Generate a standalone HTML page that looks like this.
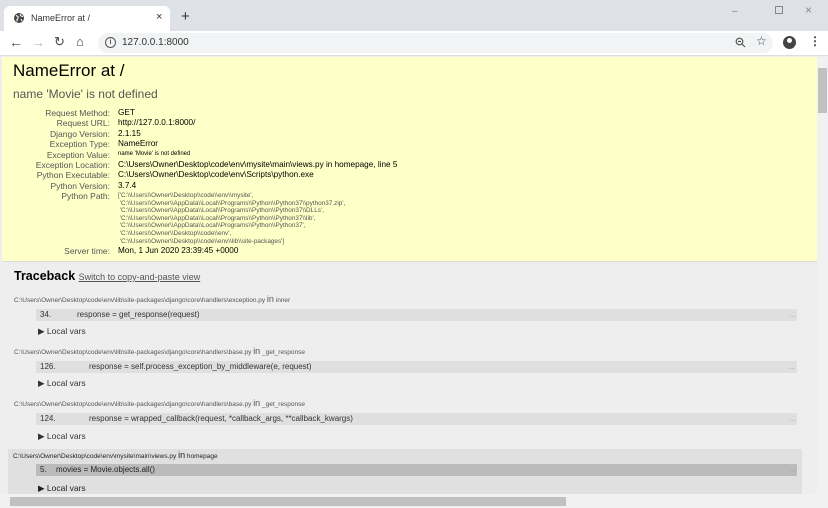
<!DOCTYPE html>
<html><head><style>
*{margin:0;padding:0;box-sizing:border-box}
body{width:828px;height:508px;overflow:hidden;position:relative;font-family:"Liberation Sans",Arial,sans-serif;background:#eee;color:#000}
.a{position:absolute;white-space:nowrap}
.lbl{position:absolute;right:718px;font-size:8.5px;color:#555;text-align:right}
.val{position:absolute;left:118px;font-size:8.2px}
.path{font-size:6.4px;color:#555;line-height:7.6px}
.fn{position:absolute;left:14px;font-size:6.5px;color:#555}
.fn b{font-weight:normal;font-size:9px}
.bar{position:absolute;left:36px;width:761px;height:12px;background:#dfdfdf;font-size:8px;color:#333;line-height:12px}
.bar .n{position:absolute;left:4px}
.bar .c{position:absolute}
.bar .d{position:absolute;right:2px;top:1px;font-size:7px;color:#999}
.lv{position:absolute;left:38px;font-size:8.5px;color:#333}
</style></head><body>
<div class="a" style="left:0;top:0;width:828px;height:31px;background:#dee1e6"></div>
<div class="a" style="left:4px;top:6px;width:166px;height:25px;background:#fff;border-radius:6px 6px 0 0"></div>
<svg class="a" style="left:13px;top:12px" width="12" height="12" viewBox="0 0 12 12"><circle cx="6" cy="6" r="5" fill="#444"/><path d="M3 3.5l2 1v2l-1 1v2M7 2l1 2 2 .5M8 7l1 2" stroke="#fff" stroke-width="1.1" fill="none"/></svg>
<div class="a" style="left:31px;top:13px;font-size:9px;color:#333">NameError at /</div>
<div class="a" style="left:156px;top:11px;font-size:11px;color:#333">×</div>
<div class="a" style="left:181px;top:8px;font-size:15px;color:#333">+</div>
<div class="a" style="left:732px;top:6px;font-size:10px;color:#888">–</div>
<div class="a" style="left:775px;top:6px;width:8px;height:8px;border:1px solid #888"></div>
<div class="a" style="left:805px;top:3px;font-size:12px;color:#888">×</div>
<div class="a" style="left:0;top:31px;width:828px;height:25px;background:#fff;border-bottom:1px solid #ddd"></div>
<div class="a" style="left:9px;top:34px;font-size:14px;color:#444">←</div>
<div class="a" style="left:31px;top:34px;font-size:14px;color:#bbb">→</div>
<div class="a" style="left:54px;top:34px;font-size:13px;color:#444">↻</div>
<div class="a" style="left:76px;top:34px;font-size:13px;color:#444">⌂</div>
<div class="a" style="left:98px;top:33px;width:675px;height:20px;background:#f1f3f4;border-radius:10px"></div>
<div class="a" style="left:105px;top:37px;width:11px;height:11px;border:1.3px solid #555;border-radius:50%;font-size:7px;text-align:center;line-height:9px;color:#555;font-weight:bold">i</div>
<div class="a" style="left:122px;top:37px;font-size:10px;color:#333">127.0.0.1:8000</div>
<svg class="a" style="left:735px;top:37px" width="11" height="11" viewBox="0 0 11 11"><circle cx="4.5" cy="4.5" r="3.3" stroke="#555" stroke-width="1.2" fill="none"/><path d="M7 7l3 3M3 4.5h3" stroke="#555" stroke-width="1.2"/></svg>
<div class="a" style="left:756px;top:34px;font-size:12px;color:#444">☆</div>
<div class="a" style="left:783px;top:36px;width:13px;height:13px;border-radius:50%;background:#444"></div>
<div class="a" style="left:787px;top:38px;width:5px;height:5px;border-radius:50%;background:#fff"></div>
<div class="a" style="left:809px;top:34px;font-size:12px;color:#444;font-weight:bold">⋮</div>
<div class="a" style="left:2px;top:57px;width:815px;height:205px;background:#ffffc8;border-bottom:1px solid #ddd"></div>
<div class="a" style="left:13px;top:61px;font-size:17px">NameError at /</div>
<div class="a" style="left:13px;top:87px;font-size:12px;color:#575757">name 'Movie' is not defined</div>
<div class="lbl" style="top:108px">Request Method:</div><div class="val" style="top:108px">GET</div>
<div class="lbl" style="top:118px">Request URL:</div><div class="val" style="top:118px">http://127.0.0.1:8000/</div>
<div class="lbl" style="top:129px">Django Version:</div><div class="val" style="top:129px">2.1.15</div>
<div class="lbl" style="top:139px">Exception Type:</div><div class="val" style="top:139px">NameError</div>
<div class="lbl" style="top:150px">Exception Value:</div><div class="val" style="top:151px;font-size:6px">name 'Movie' is not defined</div>
<div class="lbl" style="top:160px">Exception Location:</div><div class="val" style="top:160px">C:\Users\Owner\Desktop\code\env\mysite\main\views.py in homepage, line 5</div>
<div class="lbl" style="top:170px">Python Executable:</div><div class="val" style="top:170px">C:\Users\Owner\Desktop\code\env\Scripts\python.exe</div>
<div class="lbl" style="top:181px">Python Version:</div><div class="val" style="top:181px">3.7.4</div>
<div class="lbl" style="top:191px">Python Path:</div>
<div class="val path" style="top:192px">['C:\\Users\\Owner\\Desktop\\code\\env\\mysite',<br>&nbsp;'C:\\Users\\Owner\\AppData\\Local\\Programs\\Python\\Python37\\python37.zip',<br>&nbsp;'C:\\Users\\Owner\\AppData\\Local\\Programs\\Python\\Python37\\DLLs',<br>&nbsp;'C:\\Users\\Owner\\AppData\\Local\\Programs\\Python\\Python37\\lib',<br>&nbsp;'C:\\Users\\Owner\\AppData\\Local\\Programs\\Python\\Python37',<br>&nbsp;'C:\\Users\\Owner\\Desktop\\code\\env',<br>&nbsp;'C:\\Users\\Owner\\Desktop\\code\\env\\lib\\site-packages']</div>
<div class="lbl" style="top:246px">Server time:</div><div class="val" style="top:246px">Mon, 1 Jun 2020 23:39:45 +0000</div>
<div class="a" style="left:14px;top:269px;font-size:12.5px;font-weight:bold">Traceback <span style="font-weight:normal;font-size:9px;color:#555;text-decoration:underline">Switch to copy-and-paste view</span></div>
<div class="fn" style="top:294px">C:\Users\Owner\Desktop\code\env\lib\site-packages\django\core\handlers\exception.py <b>in</b> inner</div>
<div class="bar" style="top:309px"><span class="n">34.</span><span class="c" style="left:41px">response = get_response(request)</span><span class="d">...</span></div>
<div class="lv" style="top:326px">▶ Local vars</div>
<div class="fn" style="top:346px">C:\Users\Owner\Desktop\code\env\lib\site-packages\django\core\handlers\base.py <b>in</b> _get_response</div>
<div class="bar" style="top:361px"><span class="n">126.</span><span class="c" style="left:53px">response = self.process_exception_by_middleware(e, request)</span><span class="d">...</span></div>
<div class="lv" style="top:378px">▶ Local vars</div>
<div class="fn" style="top:398px">C:\Users\Owner\Desktop\code\env\lib\site-packages\django\core\handlers\base.py <b>in</b> _get_response</div>
<div class="bar" style="top:413px"><span class="n">124.</span><span class="c" style="left:53px">response = wrapped_callback(request, *callback_args, **callback_kwargs)</span><span class="d">...</span></div>
<div class="lv" style="top:431px">▶ Local vars</div>
<div class="a" style="left:8px;top:449px;width:794px;height:46px;background:#e0e0e0"></div>
<div class="fn" style="top:450px;left:13px;color:#222">C:\Users\Owner\Desktop\code\env\mysite\main\views.py <b>in</b> homepage</div>
<div class="bar" style="top:464px;background:#bbb;color:#222"><span class="n">5.</span><span class="c" style="left:20px">movies = Movie.objects.all()</span><span class="d">...</span></div>
<div class="lv" style="top:483px;color:#222">▶ Local vars</div>
<div class="a" style="left:817px;top:57px;width:11px;height:437px;background:#f1f1f1"></div>
<div class="a" style="left:818px;top:68px;width:9px;height:45px;background:#c1c1c1"></div>
<div class="a" style="left:0;top:494px;width:828px;height:14px;background:#f1f1f1"></div>
<div class="a" style="left:10px;top:497px;width:556px;height:9px;background:#c1c1c1"></div>
</body></html>
